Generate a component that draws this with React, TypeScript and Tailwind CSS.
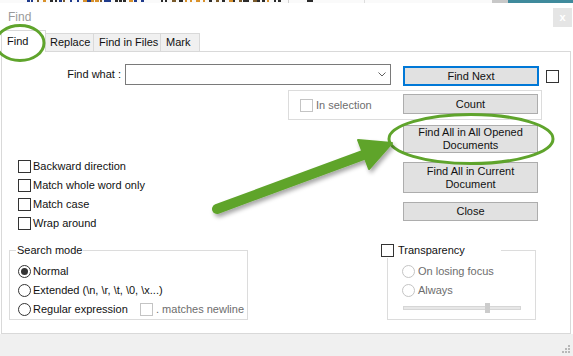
import React from "react";

function Check({ disabled }: { disabled?: boolean }) {
  return (
    <span
      className={
        disabled
          ? "block w-[13px] h-[13px] shrink-0 border border-[#c4c4c4] bg-white"
          : "block w-[13px] h-[13px] shrink-0 border border-[#333333] bg-white"
      }
    />
  );
}

function Radio({ checked, disabled }: { checked?: boolean; disabled?: boolean }) {
  return (
    <span
      className={
        disabled
          ? "flex items-center justify-center w-[13px] h-[13px] shrink-0 rounded-full border border-[#c4c4c4] bg-white"
          : "flex items-center justify-center w-[13px] h-[13px] shrink-0 rounded-full border border-[#333333] bg-white"
      }
    >
      {checked ? <span className="block w-[7px] h-[7px] rounded-full bg-[#333333]" /> : null}
    </span>
  );
}

function TopStrip() {
  const rects: { x: number; w: number; c: string }[] = [];
  const colors = ["#2b2b2b", "#d9912a", "#1f3b8c", "#2b2b2b", "#7a5a2a"];
  let seed = 7;
  const rnd = () => {
    seed = (seed * 9301 + 49297) % 233280;
    return seed / 233280;
  };
  for (let x = 27; x < 146; x += 4 + Math.floor(rnd() * 4)) {
    rects.push({ x, w: 2 + Math.floor(rnd() * 3), c: colors[Math.floor(rnd() * colors.length)] });
  }
  for (let x = 161; x < 282; x += 4 + Math.floor(rnd() * 4)) {
    rects.push({ x, w: 2 + Math.floor(rnd() * 3), c: colors[Math.floor(rnd() * colors.length)] });
  }
  return (
    <svg width="573" height="3" className="block shrink-0">
      <rect x="0" y="0" width="573" height="3" fill="#fafafa" />
      {rects.map((r, i) => (
        <rect key={i} x={r.x} y="0" width={r.w} height="2" fill={r.c} />
      ))}
      <rect x="288" y="0" width="1" height="3" fill="#d0d0d0" />
      <rect x="307" y="0" width="6" height="2" fill="#2b2b2b" />
      <rect x="364" y="0" width="1" height="3" fill="#dddddd" />
      <rect x="492" y="0" width="16" height="3" fill="#c8c8c8" />
      <rect x="508" y="0" width="65" height="3" fill="#3f8a9c" />
    </svg>
  );
}

export default function App() {
  return (
    <div className="relative w-[573px] h-[356px] overflow-hidden bg-white font-['Liberation_Sans',Arial,sans-serif] text-[11px] text-[#111111] flex flex-col">
      <TopStrip />

      {/* title bar */}
      <div className="flex items-start h-[27px] shrink-0">
        <span className="ml-[8px] mt-[7px] text-[12px] leading-[14px] text-[#9a9a9a]">Find</span>
        <div className="ml-auto mr-[1px] mt-[5px] w-[19px] h-[19px] bg-[#e5e5e5] flex items-center justify-center text-white text-[11px] font-bold leading-none">
          x
        </div>
      </div>

      {/* tabs */}
      <div className="flex items-end h-[21px] shrink-0 ml-[1px]">
        <div className="relative z-10 -mb-px h-[22px] w-[45px] bg-white border border-b-0 border-[#d9d9d9] flex items-center pl-[5px] pb-[1px]">
          Find
        </div>
        <div className="h-[18px] w-[48px] bg-[#f0f0f0] border-t border-r border-[#d9d9d9] flex items-center pl-[4px]">
          Replace
        </div>
        <div className="h-[18px] w-[67px] bg-[#f0f0f0] border-t border-r border-[#d9d9d9] flex items-center pl-[5px]">
          Find in Files
        </div>
        <div className="h-[18px] w-[39px] bg-[#f0f0f0] border-t border-r border-[#d9d9d9] flex items-center pl-[5px]">
          Mark
        </div>
      </div>

      {/* panel */}
      <div className="ml-[1px] w-[570px] h-[283px] shrink-0 border border-[#d9d9d9] bg-white flex flex-col">
        {/* row 1 */}
        <div className="mt-[12px] flex items-start h-[21px]">
          <div className="w-[119px] h-[21px] flex items-center justify-end">Find what :</div>
          <div className="ml-[4px] w-[266px] h-[21px] border border-[#7a7a7a] bg-white flex items-center justify-end pr-[4px]">
            <svg width="8" height="5" viewBox="0 0 8 5">
              <path d="M0.5 0.5 L4 4 L7.5 0.5" fill="none" stroke="#606060" strokeWidth="1" />
            </svg>
          </div>
          <div className="ml-[12px] mt-[2px] w-[136px] h-[20px] bg-[#e1e1e1] border-2 border-[#0078d7] flex items-center justify-center">
            Find Next
          </div>
          <span className="ml-[7px] mt-[6px]">
            <Check />
          </span>
        </div>

        {/* row 2 */}
        <div className="mt-[5px] ml-[286px] w-[254px] h-[30px] border border-[#dcdcdc] flex items-start">
          <span className="ml-[11px] mt-[8px]">
            <Check disabled />
          </span>
          <span className="ml-[3px] mt-[8px] leading-[13px] text-[#6d6d6d]">In selection</span>
          <div className="ml-auto mr-[3px] mt-[3px] w-[135px] h-[20px] bg-[#e1e1e1] border border-[#adadad] flex items-center justify-center">
            Count
          </div>
        </div>

        {/* row 3 */}
        <div className="mt-[5px] flex items-start">
          <div className="ml-[16px] w-[385px] pt-[32px] flex flex-col">
            {["Backward direction", "Match whole word only", "Match case", "Wrap around"].map((t) => (
              <div key={t} className="h-[19px] flex items-center gap-[2px]">
                <Check />
                <span>{t}</span>
              </div>
            ))}
          </div>
          <div className="w-[135px] flex flex-col">
            <div className="h-[28px] bg-[#e1e1e1] border border-[#adadad] flex flex-col items-center justify-center leading-[13px] text-center">
              <span>Find All in All Opened</span>
              <span>Documents</span>
            </div>
            <div className="mt-[9px] h-[31px] bg-[#e1e1e1] border border-[#adadad] flex flex-col items-center justify-center leading-[13px] text-center">
              <span>Find All in Current</span>
              <span>Document</span>
            </div>
            <div className="mt-[9px] h-[19px] bg-[#e1e1e1] border border-[#adadad] flex items-center justify-center">
              Close
            </div>
          </div>
        </div>

        {/* row 4 */}
        <div className="mt-[9px] flex items-start">
          <fieldset className="ml-[7px] w-[239px] border border-[#dcdcdc] p-0 m-0">
            <legend className="ml-[6px] px-[1px] leading-[16px]">Search mode</legend>
            <div className="pl-[8px] pt-[4px] flex flex-col">
              <div className="h-[19px] flex items-center gap-[2px]">
                <Radio checked />
                <span>Normal</span>
              </div>
              <div className="h-[19px] flex items-center gap-[2px]">
                <Radio />
                <span>Extended (\n, \r, \t, \0, \x...)</span>
              </div>
              <div className="h-[19px] flex items-center">
                <div className="w-[122px] flex items-center gap-[2px]">
                  <Radio />
                  <span>Regular expression</span>
                </div>
                <Check disabled />
                <span className="ml-[3px] text-[#6d6d6d]">. matches newline</span>
              </div>
            </div>
          </fieldset>

          <fieldset className="ml-[139px] w-[149px] border border-[#dcdcdc] p-0 m-0">
            <legend className="-ml-[7px] w-[120px] p-0 leading-[16px]">
              <span className="flex items-center h-[16px] gap-[4px]">
                <Check />
                <span>Transparency</span>
              </span>
            </legend>
            <div className="pl-[14px] pt-[4px] flex flex-col">
              <div className="h-[19px] flex items-center gap-[3px] text-[#6d6d6d]">
                <Radio disabled />
                <span>On losing focus</span>
              </div>
              <div className="h-[19px] flex items-center gap-[3px] text-[#6d6d6d]">
                <Radio disabled />
                <span>Always</span>
              </div>
              <div className="h-[19px] pt-[6px]">
                <div className="relative ml-[1px] w-[118px] h-[4px] bg-[#e7e7e7] border border-[#d6d6d6]">
                  <div className="absolute left-[81px] top-[-4px] w-[5px] h-[10px] bg-[#cccccc]" />
                </div>
              </div>
            </div>
          </fieldset>
        </div>
      </div>

      {/* bottom band */}
      <div className="relative flex-1 bg-[#f0f0f0]">
        <svg className="absolute right-[2px] bottom-[2px]" width="9" height="9" viewBox="0 0 9 9">
          <rect x="6" y="0" width="2" height="2" fill="#b8b8b8" />
          <rect x="3" y="3" width="2" height="2" fill="#b8b8b8" />
          <rect x="6" y="3" width="2" height="2" fill="#b8b8b8" />
          <rect x="0" y="6" width="2" height="2" fill="#b8b8b8" />
          <rect x="3" y="6" width="2" height="2" fill="#b8b8b8" />
          <rect x="6" y="6" width="2" height="2" fill="#b8b8b8" />
        </svg>
      </div>

      {/* annotations */}
      <svg className="absolute inset-0 pointer-events-none z-20" width="573" height="356" viewBox="0 0 573 356">
        <defs>
          <filter id="sh" x="-20%" y="-40%" width="140%" height="180%">
            <feDropShadow dx="2" dy="3" stdDeviation="2" floodColor="#000000" floodOpacity="0.35" />
          </filter>
        </defs>
        <ellipse cx="20" cy="43" rx="24" ry="17.5" fill="none" stroke="#5fa42c" strokeWidth="3" />
        <ellipse cx="471" cy="139" rx="82" ry="24.5" fill="none" stroke="#5fa42c" strokeWidth="3" />
        <g filter="url(#sh)">
          <line x1="217" y1="209" x2="366" y2="154" stroke="#5fa42c" strokeWidth="10" strokeLinecap="round" />
          <polygon points="392,143 358,140 369,169" fill="#5fa42c" stroke="#5fa42c" strokeWidth="2" strokeLinejoin="round" />
        </g>
      </svg>
    </div>
  );
}
